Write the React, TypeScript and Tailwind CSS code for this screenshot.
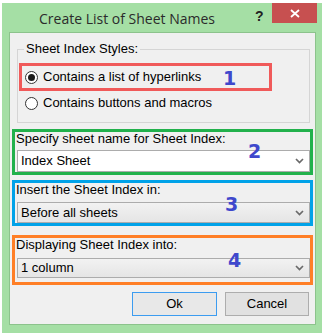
const ui = { fontFamily: '"Liberation Sans", Arial, sans-serif' };

function Chevron() {
  return (
    <svg width="9" height="6" viewBox="0 0 9 6" className="mr-[5px]">
      <path d="M1 1 L4.5 4.5 L8 1" fill="none" stroke="#6a6a6a" strokeWidth="1.7" />
    </svg>
  );
}

function Select({ value, white, h }: { value: string; white?: boolean; h: string }) {
  return (
    <div
      className={
        "flex items-center justify-between border border-[#acacac] pl-[3px] text-black " +
        h +
        (white ? " bg-white" : " bg-gradient-to-b from-[#f2f2f2] to-[#e5e5e5]")
      }
    >
      <span>{value}</span>
      <Chevron />
    </div>
  );
}

function Radio({ checked }: { checked?: boolean }) {
  return (
    <span className="flex h-[13px] w-[13px] items-center justify-center rounded-full border border-[#333] bg-white">
      {checked && <span className="h-[7px] w-[7px] rounded-full bg-[#1a1a1a]" />}
    </span>
  );
}

function Mark({ n, className }: { n: string; className: string }) {
  return (
    <span
      className={"absolute text-[19px] font-bold leading-none text-[#3f48cc] " + className}
      style={{ fontFamily: '"DejaVu Sans", sans-serif' }}
    >
      {n}
    </span>
  );
}

export default function App() {
  return (
    <div className="relative h-[334px] w-[326px] overflow-hidden bg-white" style={ui}>
      <div className="ml-[2px] mt-[3px] flex h-[330px] w-[320px] flex-col bg-[#a5dfa5]">
        {/* title bar */}
        <div className="relative flex h-[29px] items-center">
          <span
            className="pl-[37px] pt-[1px] text-[14px] text-[#2b2b2b]"
            style={{ fontFamily: '"Open Sans", sans-serif' }}
          >
            Create List of Sheet Names
          </span>
          <span className="absolute left-[253px] top-[3px] text-[14px] font-bold text-[#222]">?</span>
          <div className="absolute left-[270px] top-0 flex h-[20px] w-[45px] items-center justify-center bg-[#c75050]">
            <svg width="10" height="9" viewBox="0 0 10 9">
              <path d="M1 1 L9 8 M9 1 L1 8" stroke="white" strokeWidth="1.8" />
            </svg>
          </div>
        </div>

        {/* client */}
        <div className="relative ml-[7px] h-[293px] w-[307px] border border-[#8cc38c] bg-[#f0f0f0] text-[13px] text-black">
          {/* group */}
          <div className="relative ml-[7px] mt-[16px] h-[74px] w-[293px] border border-[#d5d5d5]">
            <span className="absolute -top-[9px] left-[6px] bg-[#f0f0f0] px-[2px] leading-[16px]">
              Sheet Index Styles:
            </span>
            <div className="ml-[1px] mt-[13px] flex h-[28px] w-[253px] items-center border-[3px] border-[#f05a5a] pl-[3px]">
              <Radio checked />
              <span className="ml-[5px]">Contains a list of hyperlinks</span>
            </div>
            <div className="flex h-[24px] items-center pl-[7px]">
              <Radio />
              <span className="ml-[5px]">Contains buttons and macros</span>
            </div>
          </div>

          {/* sheet name */}
          <div className="ml-[2px] mt-[6px] h-[46px] w-[301px] border-[3px] border-[#22b14c]">
            <div className="h-[13px] pl-[1px] leading-[13px]">Specify sheet name for Sheet Index:</div>
            <div className="ml-[2px] mt-[5px] w-[293px]">
              <Select value="Index Sheet" white h="h-[22px]" />
            </div>
          </div>

          {/* insert in */}
          <div className="ml-[2px] mt-[5px] h-[46px] w-[301px] border-[3px] border-[#00a2e8]">
            <div className="h-[13px] pl-[1px] leading-[13px]">Insert the Sheet Index in:</div>
            <div className="ml-[2px] mt-[6px] w-[293px]">
              <Select value="Before all sheets" h="h-[21px]" />
            </div>
          </div>

          {/* display */}
          <div className="ml-[2px] mt-[9px] h-[50px] w-[301px] border-[3px] border-[#ff7f27]">
            <div className="h-[13px] pl-[1px] leading-[13px]">Displaying Sheet Index into:</div>
            <div className="ml-[2px] mt-[7px] w-[293px]">
              <Select value="1 column" h="h-[20px]" />
            </div>
          </div>

          {/* buttons */}
          <div className="mr-[6px] mt-[7px] flex justify-end gap-[8px]">
            <button className="h-[24px] w-[85px] border border-[#3c9cf0] bg-[#e8e8e8] text-[13px]">Ok</button>
            <button className="h-[24px] w-[84px] border border-[#adadad] bg-[#e1e1e1] text-[13px]">Cancel</button>
          </div>

          <Mark n="1" className="left-[213px] top-[36px]" />
          <Mark n="2" className="left-[238px] top-[109px]" />
          <Mark n="3" className="left-[215px] top-[162px]" />
          <Mark n="4" className="left-[218px] top-[218px]" />
        </div>
      </div>
    </div>
  );
}
